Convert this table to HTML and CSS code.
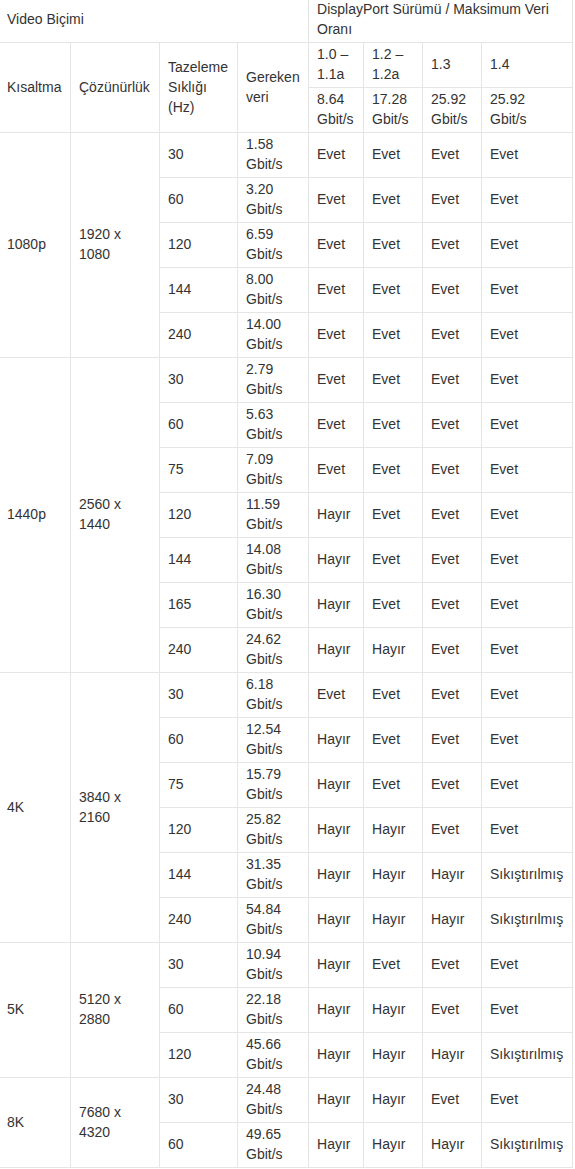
FILE: index.html
```html
<!DOCTYPE html>
<html lang="tr">
<head>
<meta charset="utf-8">
<link rel="stylesheet" href="styles.css">
</head>
<body>
<table class="dp">
<colgroup>
<col class="c1"><col class="c2"><col class="c3"><col class="c4"><col class="c5"><col class="c6"><col class="c7"><col class="c8">
</colgroup>
<thead>
<tr><th colspan="4">Video Biçimi</th><th colspan="4">DisplayPort Sürümü / Maksimum Veri Oranı</th></tr>
<tr><th rowspan="2">Kısaltma</th><th rowspan="2">Çözünürlük</th><th rowspan="2">Tazeleme Sıklığı (Hz)</th><th rowspan="2">Gereken veri</th><th>1.0 – 1.1a</th><th>1.2 – 1.2a</th><th>1.3</th><th>1.4</th></tr>
<tr><th>8.64 Gbit/s</th><th>17.28 Gbit/s</th><th>25.92 Gbit/s</th><th>25.92 Gbit/s</th></tr>
</thead>
<tbody>
<tr><td rowspan="5">1080p</td><td rowspan="5">1920 x 1080</td><td>30</td><td>1.58 Gbit/s</td><td>Evet</td><td>Evet</td><td>Evet</td><td>Evet</td></tr>
<tr><td>60</td><td>3.20 Gbit/s</td><td>Evet</td><td>Evet</td><td>Evet</td><td>Evet</td></tr>
<tr><td>120</td><td>6.59 Gbit/s</td><td>Evet</td><td>Evet</td><td>Evet</td><td>Evet</td></tr>
<tr><td>144</td><td>8.00 Gbit/s</td><td>Evet</td><td>Evet</td><td>Evet</td><td>Evet</td></tr>
<tr><td>240</td><td>14.00 Gbit/s</td><td>Evet</td><td>Evet</td><td>Evet</td><td>Evet</td></tr>
<tr><td rowspan="7">1440p</td><td rowspan="7">2560 x 1440</td><td>30</td><td>2.79 Gbit/s</td><td>Evet</td><td>Evet</td><td>Evet</td><td>Evet</td></tr>
<tr><td>60</td><td>5.63 Gbit/s</td><td>Evet</td><td>Evet</td><td>Evet</td><td>Evet</td></tr>
<tr><td>75</td><td>7.09 Gbit/s</td><td>Evet</td><td>Evet</td><td>Evet</td><td>Evet</td></tr>
<tr><td>120</td><td>11.59 Gbit/s</td><td>Hayır</td><td>Evet</td><td>Evet</td><td>Evet</td></tr>
<tr><td>144</td><td>14.08 Gbit/s</td><td>Hayır</td><td>Evet</td><td>Evet</td><td>Evet</td></tr>
<tr><td>165</td><td>16.30 Gbit/s</td><td>Hayır</td><td>Evet</td><td>Evet</td><td>Evet</td></tr>
<tr><td>240</td><td>24.62 Gbit/s</td><td>Hayır</td><td>Hayır</td><td>Evet</td><td>Evet</td></tr>
<tr><td rowspan="6">4K</td><td rowspan="6">3840 x 2160</td><td>30</td><td>6.18 Gbit/s</td><td>Evet</td><td>Evet</td><td>Evet</td><td>Evet</td></tr>
<tr><td>60</td><td>12.54 Gbit/s</td><td>Hayır</td><td>Evet</td><td>Evet</td><td>Evet</td></tr>
<tr><td>75</td><td>15.79 Gbit/s</td><td>Hayır</td><td>Evet</td><td>Evet</td><td>Evet</td></tr>
<tr><td>120</td><td>25.82 Gbit/s</td><td>Hayır</td><td>Hayır</td><td>Evet</td><td>Evet</td></tr>
<tr><td>144</td><td>31.35 Gbit/s</td><td>Hayır</td><td>Hayır</td><td>Hayır</td><td>Sıkıştırılmış</td></tr>
<tr><td>240</td><td>54.84 Gbit/s</td><td>Hayır</td><td>Hayır</td><td>Hayır</td><td>Sıkıştırılmış</td></tr>
<tr><td rowspan="3">5K</td><td rowspan="3">5120 x 2880</td><td>30</td><td>10.94 Gbit/s</td><td>Hayır</td><td>Evet</td><td>Evet</td><td>Evet</td></tr>
<tr><td>60</td><td>22.18 Gbit/s</td><td>Hayır</td><td>Hayır</td><td>Evet</td><td>Evet</td></tr>
<tr><td>120</td><td>45.66 Gbit/s</td><td>Hayır</td><td>Hayır</td><td>Hayır</td><td>Sıkıştırılmış</td></tr>
<tr><td rowspan="2">8K</td><td rowspan="2">7680 x 4320</td><td>30</td><td>24.48 Gbit/s</td><td>Hayır</td><td>Hayır</td><td>Evet</td><td>Evet</td></tr>
<tr><td>60</td><td>49.65 Gbit/s</td><td>Hayır</td><td>Hayır</td><td>Hayır</td><td>Sıkıştırılmış</td></tr>
</tbody>
</table>
</body>
</html>
```
FILE: styles.css
```css
html, body {
  margin: 0;
  padding: 0;
  background: #fff;
}
body {
  font-family: "Liberation Sans", Arial, sans-serif;
  font-size: 14px;
  line-height: 20px;
  color: #333;
  overflow: hidden;
}
.dp {
  border-collapse: collapse;
  table-layout: fixed;
  width: 575px;
  margin: -3px 0 0 -2px;
}
.dp .c1 { width: 72px; }
.dp .c2 { width: 89px; }
.dp .c3 { width: 78px; }
.dp .c4 { width: 71px; }
.dp .c5 { width: 55px; }
.dp .c6 { width: 59px; }
.dp .c7 { width: 59px; }
.dp .c8 { width: 91px; }
.dp th,
.dp td {
  border: 1px solid #e5e5e5;
  padding: 1px 8px 3px;
  height: 40px;
  vertical-align: middle;
  text-align: left;
  font-weight: normal;
}
```
